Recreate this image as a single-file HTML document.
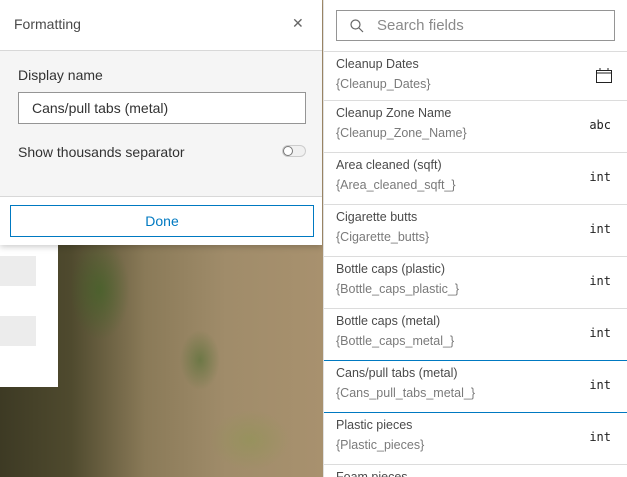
<!DOCTYPE html>
<html><head><style>
*{margin:0;padding:0;box-sizing:border-box}
html,body{width:627px;height:477px;overflow:hidden}
body{position:relative;font-family:"Liberation Sans",sans-serif;background:#fff}
.map{position:absolute;left:0;top:0;width:323px;height:477px;background:
radial-gradient(ellipse 30px 50px at 100px 290px,rgba(60,100,35,.6),transparent),
radial-gradient(ellipse 40px 30px at 250px 440px,rgba(140,150,80,.5),transparent),
radial-gradient(ellipse 20px 30px at 200px 360px,rgba(80,110,50,.6),transparent),
linear-gradient(90deg,#3d3a24 0%,#4f4a2e 22%,#8a7a58 45%,#a08c6a 70%,#a8916e 100%)}
.behind{position:absolute;left:0;top:0;width:58px;height:387px;background:#fff}
.behind div{position:absolute;left:0;width:36px;height:30px;background:#ececec}
.pop{position:absolute;left:0;top:0;width:322px;height:245px;background:#f5f5f5;box-shadow:0 2px 6px rgba(0,0,0,.2)}
.hd{height:51px;background:#fff;border-bottom:1px solid #d8d8d8;position:relative}
.hd span{position:absolute;left:14px;top:16px;font-size:14px;color:#4a4a4a}
.hd b{position:absolute;left:292px;top:15px;font-weight:normal;font-size:14px;color:#666}
.lbl{position:absolute;left:18px;font-size:14px;color:#323232}
.inp{position:absolute;left:18px;top:92px;width:288px;height:32px;border:1px solid #959595;background:#fff;font-size:14px;color:#323232;padding:7px 13px}
.tog{position:absolute;left:282px;top:145px;width:24px;height:12px;border:1px solid #ccc;border-radius:7px;background:#f0f0f0}
.tog i{position:absolute;left:0;top:0;width:10px;height:10px;border:1px solid #777;border-radius:50%;background:#fff}
.ft{position:absolute;left:0;top:196px;width:322px;height:49px;background:#fff;border-top:1px solid #d8d8d8}
.btn{position:absolute;left:10px;top:8px;width:304px;height:32px;border:1px solid #0079c1;color:#0079c1;font-size:14px;text-align:center;line-height:30px}
.rp{position:absolute;left:323px;top:0;width:304px;height:477px;background:#fff;border-left:1px solid #e0e0e0;overflow:hidden}
.srch{position:absolute;left:12px;top:10px;width:279px;height:31px;border:1px solid #959595;font-size:15px;color:#8a8a8a;padding:6px 0 0 40px}
.row{position:absolute;left:0;width:304px;height:52px;border-top:1px solid #dcdcdc}
.row .t{position:absolute;left:12px;top:5px;font-size:12.5px;color:#4a4a4a}
.row .s{position:absolute;left:12px;top:25px;font-size:12.5px;color:#7a7a7a}
.row .ty{position:absolute;right:17px;top:17px;font-family:"DejaVu Sans Mono",monospace;font-size:12px;color:#222}
</style></head><body>
<div class="map"></div>
<div class="behind"><div style="top:256px"></div><div style="top:316px"></div></div>
<div class="pop">
<div class="hd"><span>Formatting</span><b>✕</b></div>
<div class="lbl" style="top:67px">Display name</div>
<div class="inp">Cans/pull tabs (metal)</div>
<div class="lbl" style="top:144px">Show thousands separator</div>
<div class="tog"><i></i></div>
<div class="ft"><div class="btn">Done</div></div>
</div>
<div class="rp">
<div class="srch">Search fields
<svg style="position:absolute;left:12px;top:7px" width="16" height="16" viewBox="0 0 16 16"><circle cx="6.5" cy="6.5" r="4.5" fill="none" stroke="#666" stroke-width="1.2"/><line x1="10" y1="10" x2="14" y2="14" stroke="#666" stroke-width="1.2"/></svg></div>
<div class="row" style="top:51px;height:49px"><div class="t">Cleanup Dates</div><div class="s">{Cleanup_Dates}</div>
<svg style="position:absolute;right:16px;top:16px" width="16" height="15" viewBox="0 0 16 15"><rect x="0.5" y="2.5" width="15" height="12" fill="none" stroke="#222"/><line x1="0" y1="5" x2="16" y2="5" stroke="#222"/><line x1="4" y1="0" x2="4" y2="3" stroke="#222"/><line x1="12" y1="0" x2="12" y2="3" stroke="#222"/></svg></div>
<div class="row" style="top:100px"><div class="t">Cleanup Zone Name</div><div class="s">{Cleanup_Zone_Name}</div><div class="ty">abc</div></div>
<div class="row" style="top:152px"><div class="t">Area cleaned (sqft)</div><div class="s">{Area_cleaned_sqft_}</div><div class="ty">int</div></div>
<div class="row" style="top:204px"><div class="t">Cigarette butts</div><div class="s">{Cigarette_butts}</div><div class="ty">int</div></div>
<div class="row" style="top:256px"><div class="t">Bottle caps (plastic)</div><div class="s">{Bottle_caps_plastic_}</div><div class="ty">int</div></div>
<div class="row" style="top:308px"><div class="t">Bottle caps (metal)</div><div class="s">{Bottle_caps_metal_}</div><div class="ty">int</div></div>
<div class="row" style="top:360px;border-top:1px solid #0079c1"><div class="t">Cans/pull tabs (metal)</div><div class="s">{Cans_pull_tabs_metal_}</div><div class="ty">int</div></div>
<div class="row" style="top:412px;border-top:1px solid #0079c1"><div class="t">Plastic pieces</div><div class="s">{Plastic_pieces}</div><div class="ty">int</div></div>
<div class="row" style="top:464px"><div class="t">Foam pieces</div></div>
</div>
</body></html>
